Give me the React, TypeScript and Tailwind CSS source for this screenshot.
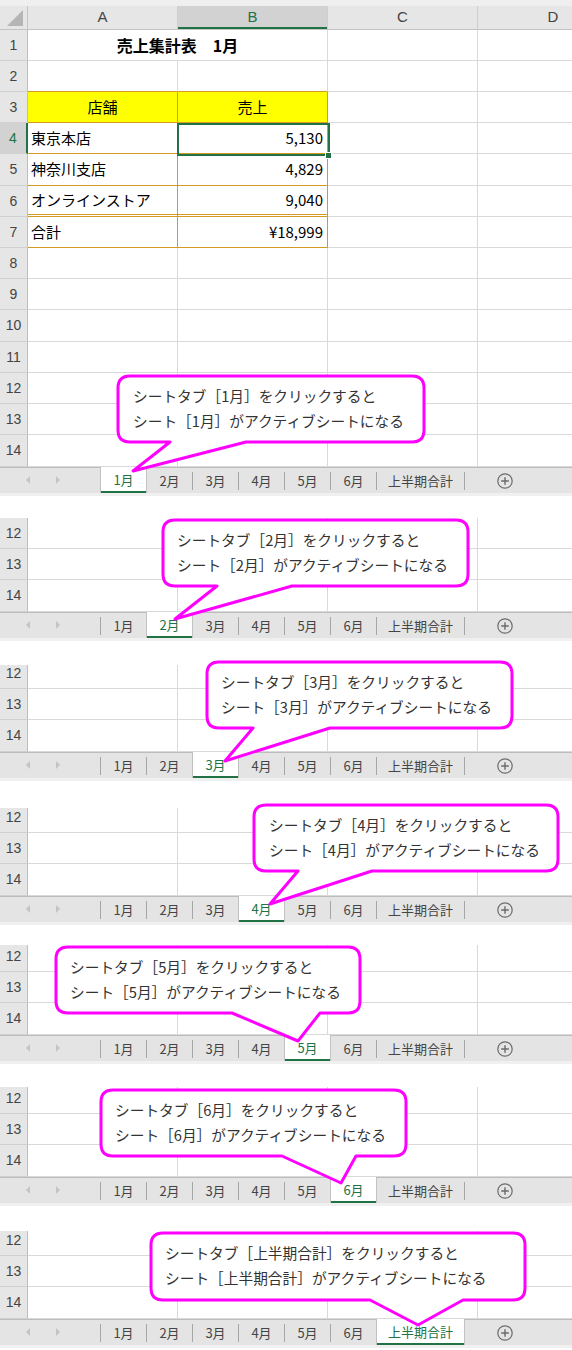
import React from 'react';

const JP = "font-['Noto_Sans_CJK_JP','Noto_Sans_CJK_SC',sans-serif]";
const NUM = "font-['Liberation_Sans','Noto_Sans_CJK_JP',sans-serif]";

const TABS = ['1月', '2月', '3月', '4月', '5月', '6月', '上半期合計'];

// row heights, whole pixels so the borders stay crisp (14 rows = 437px)
const ROW_H: Record<number, string> = {
  1: 'h-[31px]', 2: 'h-[31px]', 3: 'h-[31px]', 4: 'h-[31px]', 5: 'h-[32px]', 6: 'h-[31px]', 7: 'h-[31px]',
  8: 'h-[31px]', 9: 'h-[31px]', 10: 'h-[32px]', 11: 'h-[31px]', 12: 'h-[31px]', 13: 'h-[31px]', 14: 'h-[32px]',
};

// partial sheet strips below the first one (white gap, rows cropped on top, active tab)
const PARTS = [
  { mt: 'mt-[22px]', crop: 'mt-[0px]', active: 1 },
  { mt: 'mt-[24px]', crop: 'mt-[-7px]', active: 2 },
  { mt: 'mt-[27px]', crop: 'mt-[-6px]', active: 3 },
  { mt: 'mt-[20px]', crop: 'mt-[-4px]', active: 4 },
  { mt: 'mt-[23px]', crop: 'mt-[-4px]', active: 5 },
  { mt: 'mt-[25px]', crop: 'mt-[-6px]', active: 6 },
];

type Callout = {
  box: [number, number, number, number];
  base: [number, number];
  tip: [number, number];
  pos: string;
  name: string;
};

const CALLOUTS: Callout[] = [
  { box: [118, 376, 424, 442], base: [170, 246], tip: [133, 471], pos: 'left-[133px] top-[382.5px]', name: '1月' },
  { box: [163, 520, 468, 586], base: [217, 292], tip: [175, 619], pos: 'left-[177px] top-[526.5px]', name: '2月' },
  { box: [207, 662, 512, 728], base: [253, 330], tip: [225, 761], pos: 'left-[221px] top-[668.5px]', name: '3月' },
  { box: [254, 805, 558, 871], base: [298, 372], tip: [270, 904], pos: 'left-[269px] top-[811.5px]', name: '4月' },
  { box: [56, 947, 360, 1013], base: [232, 320], tip: [298, 1041], pos: 'left-[70px] top-[953.5px]', name: '5月' },
  { box: [101, 1090, 406, 1156], base: [282, 356], tip: [341, 1183], pos: 'left-[115px] top-[1096.5px]', name: '6月' },
  { box: [151, 1233, 525, 1300], base: [370, 463], tip: [418, 1325], pos: 'left-[165px] top-[1239.5px]', name: '上半期合計' },
];

function calloutPath(c: Callout) {
  const [x1, y1, x2, y2] = c.box;
  const r = 12;
  const [b1, b2] = c.base;
  const [tx, ty] = c.tip;
  return `M${x1 + r},${y1} H${x2 - r} Q${x2},${y1} ${x2},${y1 + r} V${y2 - r} Q${x2},${y2} ${x2 - r},${y2} H${b2} L${tx},${ty} L${b1},${y2} H${x1 + r} Q${x1},${y2} ${x1},${y2 - r} V${y1 + r} Q${x1},${y1} ${x1 + r},${y1} Z`;
}

function RowHeader({ n, active = false }: { n: number; active?: boolean }) {
  return (
    <div
      className={`w-[28px] shrink-0 flex items-center justify-center border-b border-[#d0d0d0] text-[14px] ${NUM} ${
        active
          ? 'bg-[#d2d2d2] text-[#217346] border-r-2 border-r-[#217346]'
          : 'bg-[#e6e6e6] text-[#444] border-r border-r-[#bdbdbd]'
      }`}
    >
      {n}
    </div>
  );
}

const cell = 'w-[150px] shrink-0 border-r border-b border-[#d9d9d9] flex items-center px-[3px]';
const gold = 'w-[150px] shrink-0 border-r border-b border-[#d39a26] flex items-center px-[3px]';

function BlankRow({ n }: { n: number }) {
  return (
    <div className={`flex ${ROW_H[n]}`}>
      <RowHeader n={n} />
      <div className={cell} />
      <div className={cell} />
      <div className={cell} />
      <div className={cell} />
    </div>
  );
}

function TabBar({ active }: { active: number }) {
  const sep = (i: number) => {
    // separator before tab i (i = TABS.length is the one after the last tab)
    const nearActive = i === active || i - 1 === active;
    return nearActive ? (
      <span key={`s${i}`} className="w-px self-stretch bg-[#c2c2c2]" />
    ) : (
      <span key={`s${i}`} className="w-px h-[18px] self-center bg-[#a6a6a6]" />
    );
  };

  return (
    <div>
      <div className={`flex h-[26px] bg-[#e4e4e4] border-t border-[#bdbdbd] text-[13px] text-[#444] ${JP}`}>
        <div className="w-[100px] shrink-0">
          <svg width="100" height="25" viewBox="0 0 100 25">
            <polygon points="30,8 30,16 26,12" fill="#c4c4c4" />
            <polygon points="56,8 56,16 60,12" fill="#c4c4c4" />
          </svg>
        </div>
        {TABS.map((t, i) => (
          <React.Fragment key={t}>
            {sep(i)}
            <div
              className={`${i === 6 ? 'w-[87px]' : 'w-[45px]'} shrink-0 flex items-center justify-center ${
                i === active ? 'bg-white text-[#217346] shadow-[inset_0_-2px_0_#217346] -mt-px' : ''
              }`}
            >
              {t}
            </div>
          </React.Fragment>
        ))}
        {sep(TABS.length)}
        <div className="ml-[32px] flex items-center">
          <svg width="16" height="16" viewBox="0 0 16 16">
            <circle cx="8" cy="8" r="7.2" fill="none" stroke="#6b6b6b" strokeWidth="1.2" />
            <path d="M8 4.2 V11.8 M4.2 8 H11.8" stroke="#6b6b6b" strokeWidth="1.4" />
          </svg>
        </div>
      </div>
      <div className="h-[3px] bg-[#f0f0f0]" />
    </div>
  );
}

function FullSheet() {
  return (
    <div className="relative">
      {/* column headers */}
      <div className="bg-[#efefef] pt-[6px]">
        <div className={`flex h-[24px] border-b border-[#c4c4c4] bg-[#e6e6e6] text-[15px] text-[#444] ${NUM}`}>
          <div className="w-[28px] shrink-0 border-r border-[#c4c4c4]">
            <svg width="27" height="23" viewBox="0 0 27 23">
              <polygon points="7,20 23,4 23,20" fill="#b5b5b5" />
            </svg>
          </div>
          <div className="w-[150px] shrink-0 flex items-center justify-center border-r border-[#cfcfcf]">A</div>
          <div className="w-[150px] shrink-0 flex items-center justify-center border-r border-[#cfcfcf] bg-[#d2d2d2] text-[#217346] shadow-[inset_0_-2px_0_#217346]">
            B
          </div>
          <div className="w-[150px] shrink-0 flex items-center justify-center border-r border-[#cfcfcf]">C</div>
          <div className="w-[150px] shrink-0 flex items-center justify-center">D</div>
        </div>
      </div>

      <div className={`text-[15px] text-black ${JP}`}>
        {/* row 1 */}
        <div className={`flex ${ROW_H[1]}`}>
          <RowHeader n={1} />
          <div className="w-[300px] shrink-0 border-r border-b border-[#d9d9d9] flex items-center justify-center font-bold text-[16px]">
            売上集計表　1月
          </div>
          <div className={cell} />
          <div className={cell} />
        </div>
        {/* row 2 */}
        <div className={`flex ${ROW_H[2]}`}>
          <RowHeader n={2} />
          <div className={`${cell} border-b-[#d39a26]`} />
          <div className={`${cell} border-b-[#d39a26]`} />
          <div className={cell} />
          <div className={cell} />
        </div>
        {/* row 3 */}
        <div className={`flex ${ROW_H[3]}`}>
          <RowHeader n={3} />
          <div className={`${gold} justify-center bg-[#ffff00]`}>店舗</div>
          <div className={`${gold} justify-center bg-[#ffff00]`}>売上</div>
          <div className={cell} />
          <div className={cell} />
        </div>
        {/* row 4 */}
        <div className={`flex ${ROW_H[4]}`}>
          <RowHeader n={4} active />
          <div className={gold}>東京本店</div>
          <div className={`${gold} justify-end pr-[4px]`}>5,130</div>
          <div className={cell} />
          <div className={cell} />
        </div>
        {/* row 5 */}
        <div className={`flex ${ROW_H[5]}`}>
          <RowHeader n={5} />
          <div className={gold}>神奈川支店</div>
          <div className={`${gold} justify-end pr-[4px]`}>4,829</div>
          <div className={cell} />
          <div className={cell} />
        </div>
        {/* row 6 */}
        <div className={`flex ${ROW_H[6]}`}>
          <RowHeader n={6} />
          <div className={`${gold} border-b-[3px] border-double`}>オンラインストア</div>
          <div className={`${gold} border-b-[3px] border-double justify-end pr-[4px]`}>9,040</div>
          <div className={cell} />
          <div className={cell} />
        </div>
        {/* row 7 */}
        <div className={`flex ${ROW_H[7]}`}>
          <RowHeader n={7} />
          <div className={gold}>合計</div>
          <div className={`${gold} justify-end pr-[4px]`}>¥18,999</div>
          <div className={cell} />
          <div className={cell} />
        </div>
        {[8, 9, 10, 11, 12, 13, 14].map((n) => (
          <BlankRow key={n} n={n} />
        ))}
      </div>

      {/* active cell B4 */}
      <div className="absolute left-[176.5px] top-[122.5px] w-[153px] h-[33px] border-2 border-[#217346]" />
      <div className="absolute left-[325px] top-[152px] w-[7px] h-[7px] bg-[#217346] border border-white" />

      <TabBar active={0} />
    </div>
  );
}

function PartSheet({ mt, crop, active }: { mt: string; crop: string; active: number }) {
  return (
    <div className={mt}>
      <div className="overflow-hidden">
        <div className={crop}>
          {[12, 13, 14].map((n) => (
            <BlankRow key={n} n={n} />
          ))}
        </div>
      </div>
      <TabBar active={active} />
    </div>
  );
}

export default function App() {
  return (
    <div className="relative w-[572px] h-[1350px] overflow-hidden bg-white">
      <FullSheet />
      {PARTS.map((p) => (
        <PartSheet key={p.active} mt={p.mt} crop={p.crop} active={p.active} />
      ))}

      {/* callouts */}
      <svg className="absolute left-0 top-0" width="572" height="1350" viewBox="0 0 572 1350">
        {CALLOUTS.map((c) => (
          <path key={c.name} d={calloutPath(c)} fill="white" stroke="#ff00ff" strokeWidth="3" strokeLinejoin="round" />
        ))}
      </svg>
      {CALLOUTS.map((c) => (
        <div key={c.name} className={`absolute ${c.pos} text-[14.7px] leading-[25px] text-[#333] whitespace-nowrap ${JP}`}>
          <div>シートタブ［{c.name}］をクリックすると</div>
          <div>シート［{c.name}］がアクティブシートになる</div>
        </div>
      ))}
    </div>
  );
}
